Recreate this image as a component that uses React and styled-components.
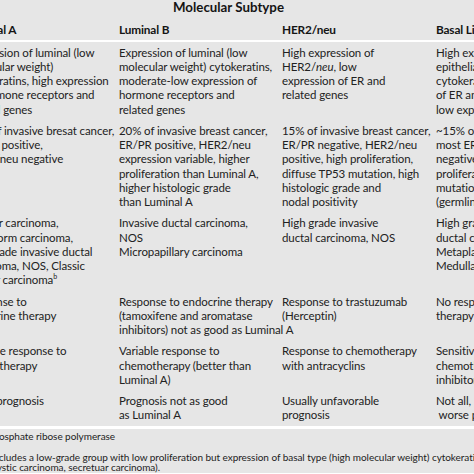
import styled, { createGlobalStyle } from "styled-components";

const GlobalStyle = createGlobalStyle`
  html, body {
    margin: 0;
    padding: 0;
    background: #e6e6e6;
  }
`;

const columns = ["Luminal A", "Luminal B", "HER2/neu", "Basal Like"];

const rows = [
  [
    [
      "Expression of luminal (low",
      "molecular weight)",
      "cytokeratins, high expression",
      "of hormone receptors and",
      "related genes",
    ],
    [
      "Expression of luminal (low",
      "molecular weight) cytokeratins,",
      "moderate-low expression of",
      "hormone receptors and",
      "related genes",
    ],
    [
      "High expression of",
      <>
        HER2/<i>neu</i>, low
      </>,
      "expression of ER and",
      "related genes",
    ],
    [
      "High expression of basal",
      "epithelial (high molecular weight)",
      "cytokeratins, low expression",
      "of ER and related genes,",
      "low expression of HER2/neu",
    ],
  ],
  [
    ["50% of invasive bresat cancer,", "ER/PR positive,", "HER2/neu negative"],
    [
      "20% of invasive breast cancer,",
      "ER/PR positive, HER2/neu",
      "expression variable, higher",
      "proliferation than Luminal A,",
      "higher histologic grade",
      "than Luminal A",
    ],
    [
      "15% of invasive breast cancer,",
      "ER/PR negative, HER2/neu",
      "positive, high proliferation,",
      "diffuse TP53 mutation, high",
      "histologic grade and",
      "nodal positivity",
    ],
    [
      "~15% of invasive breast cancer,",
      "most ER/PR/HER2/neu",
      "negative, high",
      "proliferation, TP53",
      "mutation, BRCA1",
      "(germline, sporadic)",
    ],
  ],
  [
    [
      "Tubular carcinoma,",
      "Cribriform carcinoma,",
      "Low grade invasive ductal",
      "carcinoma, NOS, Classic",
      <>
        lobular carcinoma<sup>b</sup>
      </>,
    ],
    ["Invasive ductal carcinoma,", "NOS", "Micropapillary carcinoma"],
    ["High grade invasive", "ductal carcinoma, NOS"],
    [
      "High grade invasive",
      "ductal carcinoma, NOS",
      "Metaplastic carcinoma",
      "Medullary carcinoma",
    ],
  ],
  [
    ["Response to", "endocrine therapy"],
    [
      "Response to endocrine therapy",
      "(tamoxifene and aromatase",
      "inhibitors) not as good as Luminal A",
    ],
    ["Response to trastuzumab", "(Herceptin)"],
    ["No response to endocrine", "therapy or trastuzumab"],
  ],
  [
    ["Variable response to", "chemotherapy"],
    ["Variable response to", "chemotherapy (better than", "Luminal A)"],
    ["Response to chemotherapy", "with antracyclins"],
    [
      "Sensitive to platinum",
      "chemotherapy and PARP",
      <>
        inhibitors<sup>a</sup>
      </>,
    ],
  ],
  [
    ["Good prognosis"],
    ["Prognosis not as good", "as Luminal A"],
    ["Usually unfavorable", "prognosis"],
    ["Not all, but generally", "\u00a0worse prognosis"],
  ],
];

const App = () => {
  return (
    <>
      <GlobalStyle />
      <Page>
        <Table>
          <Caption>Molecular Subtype</Caption>
          <HeadRow>
            {columns.map((c) => (
              <HeadCell key={c}>{c}</HeadCell>
            ))}
          </HeadRow>
          {rows.map((row, i) => (
            <BodyRow key={i}>
              {row.map((cell, j) => (
                <Cell key={j}>
                  {cell.map((line, k) => (
                    <Line key={k}>{line}</Line>
                  ))}
                </Cell>
              ))}
            </BodyRow>
          ))}
        </Table>
        <Notes>
          <Note $indent="-110px">
            <sup>a</sup>PARP, poly adenosine diphosphate ribose polymerase
          </Note>
          <Note $indent="-4px">
            <Line>
              <sup>b</sup>Includes a low-grade group with low proliferation
              but expression of basal type (high molecular weight) cytokeratins
              (adenoid
            </Line>
            <NoteWrap>cystic carcinoma, secretuar carcinoma).</NoteWrap>
          </Note>
        </Notes>
      </Page>
    </>
  );
};

export default App;

const Page = styled.div`
  width: 474px;
  height: 474px;
  overflow: hidden;
  background: #e6e6e6;
  color: #222;
  font-family: Lato, "Liberation Sans", sans-serif;
`;

const Table = styled.div`
  margin-left: -34px;
  width: 720px;
  border-bottom: 3px solid #ffffff;
`;

const Caption = styled.div`
  padding-left: 207px;
  font-size: 13.3px;
  font-weight: 700;
  line-height: 15px;
  color: #141414;
`;

const HeadRow = styled.div`
  display: grid;
  grid-template-columns: 153px 163px 154px 250px;
  padding: 7px 0 3px;
  border-bottom: 2px solid #ffffff;
`;

const HeadCell = styled.div`
  font-size: 11.8px;
  font-weight: 700;
  letter-spacing: -0.15px;
  line-height: 15px;
  color: #141414;
  white-space: nowrap;
`;

const BodyRow = styled.div`
  display: grid;
  grid-template-columns: 153px 163px 154px 250px;
  padding: 3.5px 0;
`;

const Cell = styled.div`
  font-size: 11.5px;
  letter-spacing: -0.1px;
  line-height: 14.25px;
  sup {
    font-size: 7px;
    line-height: 0;
    vertical-align: 5px;
  }
`;

const Line = styled.span`
  display: block;
  white-space: nowrap;
`;

const Notes = styled.div`
  margin-left: -9px;
  width: 520px;
  padding-top: 2px;
  font-size: 10px;
  letter-spacing: -0.05px;
  line-height: 10.5px;
  border-bottom: 2px solid #ffffff;
  sup {
    font-size: 6.5px;
    line-height: 0;
    vertical-align: 4px;
  }
`;

const Note = styled.div`
  text-indent: ${(p) => p.$indent};
  white-space: nowrap;
  &:first-child {
    line-height: 11px;
  }
  & + & {
    margin-top: 9.5px;
  }
`;

const NoteWrap = styled.span`
  display: block;
  white-space: nowrap;
  text-indent: 1px;
`;
